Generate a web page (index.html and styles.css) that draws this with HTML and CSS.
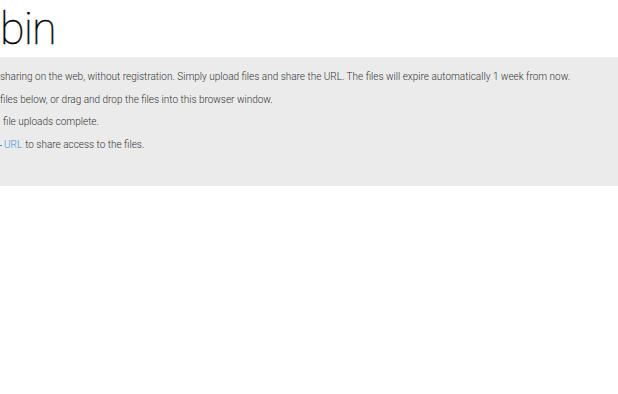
FILE: index.html
```html
<!DOCTYPE html>
<html>
<head>
<meta charset="utf-8">
<link rel="stylesheet" href="styles.css">
</head>
<body>
<div class="page">
  <header class="head">
    <h1 class="title">bin</h1>
  </header>
  <section class="jumbo">
    <p class="lead">sharing on the web, without registration. Simply upload files and share the URL. The files will expire automatically 1 week from now.</p>
    <p class="step">files below, or drag and drop the files into this browser window.</p>
    <p class="step step-3">file uploads complete.</p>
    <p class="step step-4"><span class="sliver"></span><a class="link" href="#">URL</a> to share access to the files.</p>
  </section>
</div>
</body>
</html>
```

FILE: styles.css
```css
html, body {
  margin: 0;
  padding: 0;
  background: #ffffff;
  overflow: hidden;
}
body {
  width: 618px;
  height: 394px;
  font-family: Roboto, "Noto Sans", sans-serif;
  color: #333333;
}
.page {
  width: 618px;
}
.head {
  height: 57px;
  display: flex;
  align-items: flex-start;
}
.title {
  margin: 0;
  font-weight: 100;
  font-size: 45px;
  line-height: 57px;
  color: #000000;
  letter-spacing: -1px;
  -webkit-text-stroke: 0.4px #000000;
}
.jumbo {
  background: #ebebeb;
  height: 129px;
  padding-top: 9px;
  box-sizing: border-box;
}
.jumbo p {
  margin: 0;
  font-size: 10px;
  font-weight: 300;
  line-height: 22.7px;
}
.step-3 {
  padding-left: 3px;
}
.step-4 {
  display: flex;
  align-items: center;
}
.sliver {
  display: inline-block;
  width: 2px;
  height: 1px;
  margin-right: 2px;
  background: #3a8fd9;
}
.step-4 .link {
  margin-right: 3px;
}
.link {
  color: #3a8fd9;
  text-decoration: none;
}
```
